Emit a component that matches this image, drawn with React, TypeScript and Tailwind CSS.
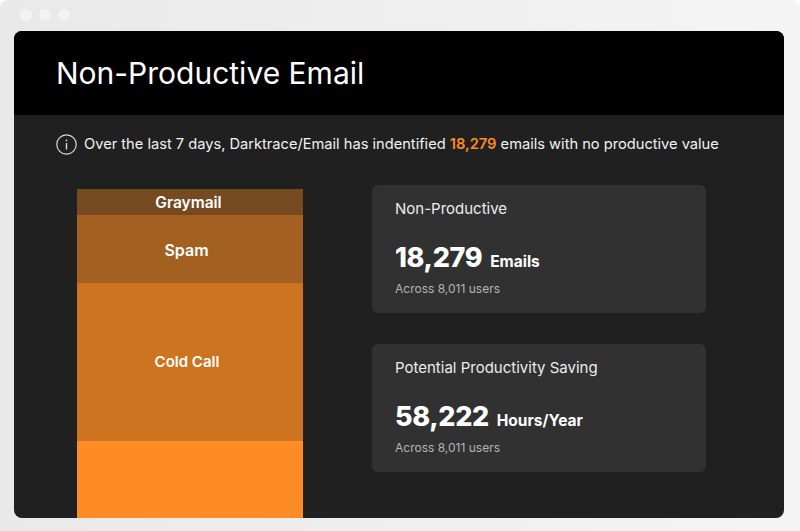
import React from 'react';

const StatCard = ({ title, value, unit }: { title: string; value: string; unit: string }) => (
  <div className="h-[128px] w-[334px] rounded-[6px] bg-[#313131] pl-[23px] pt-[14px] text-white">
    <div className="text-[15px] leading-[20px] text-[#ececec]">{title}</div>
    <div className="mt-[19px] flex items-baseline leading-[40px]">
      <span className="text-[27px] font-extrabold tracking-[-0.4px]">{value}</span>
      <span className="ml-[8px] text-[15.5px] font-bold">{unit}</span>
    </div>
    <div className="mt-[-2px] text-[12px] leading-[18px] text-[#b4b4b4]">Across 8,011 users</div>
  </div>
);

const App: React.FC = () => {
  return (
    <div className="h-[531px] w-[800px] overflow-hidden bg-white font-['Inter',sans-serif]">
      <div className="flex h-[531px] flex-col rounded-t-[8px] bg-gradient-to-r from-[#e9e9e9] to-[#f4f4f4] pb-[13px] pl-[14px] pr-[16px]">
        {/* window dots */}
        <div className="flex h-[31px] shrink-0 gap-[7px] pl-[6px] pt-[9px]">
          <span className="h-[12px] w-[12px] rounded-full bg-[#f3f3f3]" />
          <span className="h-[12px] w-[12px] rounded-full bg-[#f3f3f3]" />
          <span className="h-[12px] w-[12px] rounded-full bg-[#f3f3f3]" />
        </div>

        <div className="flex min-h-0 flex-1 flex-col overflow-hidden rounded-[8px] bg-[#202020]">
          <div className="flex h-[84px] shrink-0 items-center bg-black pl-[42px]">
            <h1 className="text-[30px] font-normal tracking-[0px] text-white">Non-Productive Email</h1>
          </div>

          <div className="flex h-[70px] shrink-0 items-start gap-[7px] pl-[42px] pt-[19px] text-[14.65px] leading-[21px] text-[#f2f2f2]">
            <svg width="21" height="21" viewBox="0 0 21 21" fill="none" stroke="#d8d8d8" strokeWidth="1.2">
              <circle cx="10.5" cy="10.5" r="9.7" />
              <path d="M10.5 9v6.5" strokeWidth="1.4" />
              <path d="M10.5 5.6v1.6" strokeWidth="1.4" />
            </svg>
            <p>
              Over the last 7 days, Darktrace/Email has indentified{' '}
              <span className="font-semibold text-[#fd8c24]">18,279</span> emails with no productive value
            </p>
          </div>

          <div className="flex min-h-0 flex-1 items-start pl-[63px]">
            <div className="mt-[4px] flex w-[226px] shrink-0 flex-col text-[15px] font-semibold text-white">
              <div className="flex h-[26px] items-center justify-center bg-[#754a20] pr-[3px] pt-[2px] text-[15.5px]">Graymail</div>
              <div className="flex h-[68px] items-start justify-center bg-[#a36020] pr-[7px] pt-[24px] text-[16px] leading-[22px]">Spam</div>
              <div className="flex h-[158px] items-start justify-center bg-[#cd7421] pr-[6px] pt-[68px] leading-[22px]">Cold Call</div>
              <div className="h-[77px] bg-[#fd8c24]" />
            </div>

            <div className="ml-[69px] flex flex-col gap-[31px]">
              <StatCard title="Non-Productive" value="18,279" unit="Emails" />
              <StatCard title="Potential Productivity Saving" value="58,222" unit="Hours/Year" />
            </div>
          </div>
        </div>
      </div>
    </div>
  );
};

export default App;
